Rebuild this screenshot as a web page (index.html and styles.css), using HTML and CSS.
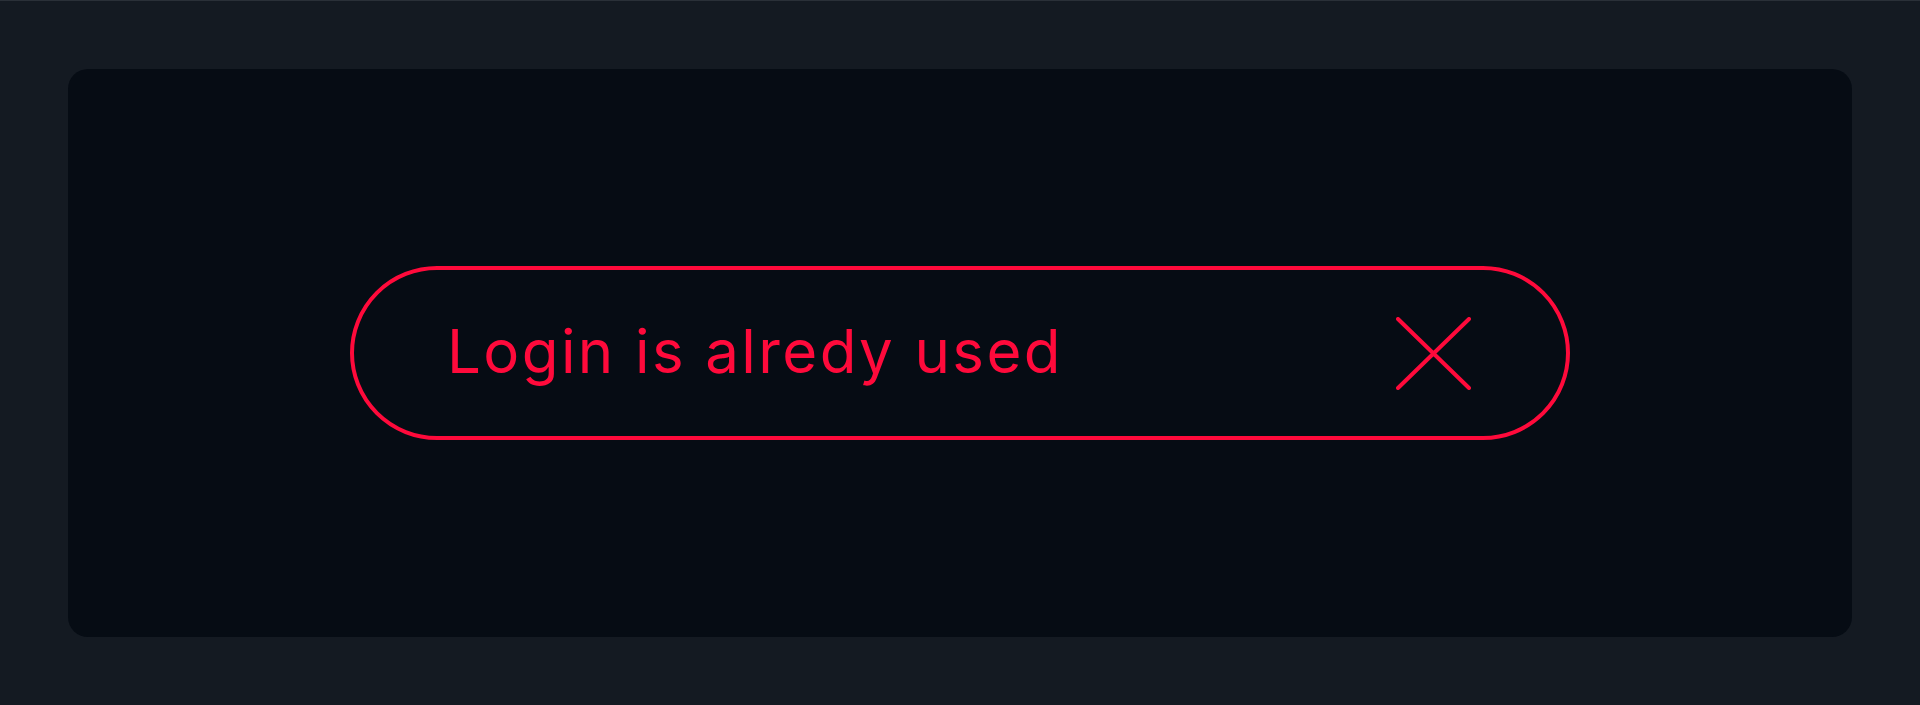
FILE: index.html
```html
<!DOCTYPE html>
<html>
<head>
  <title>Login error</title>
  <link rel="stylesheet" href="styles.css">
</head>
<body>
<div class="page">
  <div class="panel">
    <div class="alert">
      <span class="alert-text">Login is alredy used</span>
      <button class="close" type="button" aria-label="Close">
        <svg width="75" height="73" viewBox="0 0 75 73">
          <path d="M2 2 L73 71 M73 2 L2 71" stroke="#ff0a3b" stroke-width="4" stroke-linecap="round" fill="none"/>
        </svg>
      </button>
    </div>
  </div>
</div>
</body>
</html>
```

FILE: styles.css
```css
html, body {
  margin: 0;
  padding: 0;
  background: #141a22;
}
.page {
  height: 705px;
  box-sizing: border-box;
  padding: 68px;
  border-top: 1px solid #2a3038;
  display: flex;
}
.panel {
  flex: 1;
  background: #060c14;
  border-radius: 20px;
  display: flex;
  align-items: center;
  justify-content: center;
}
.alert {
  width: 1220px;
  height: 174px;
  box-sizing: border-box;
  border: 4px solid #ff0a3b;
  border-radius: 87px;
  padding: 0 95px 0 93px;
  display: flex;
  align-items: center;
  justify-content: space-between;
}
.alert-text {
  font-family: "Inter", "Liberation Sans", sans-serif;
  font-weight: 400;
  font-size: 60px;
  color: #ff0a3b;
  letter-spacing: 2.4px;
  margin-bottom: 5px;
}
.close {
  background: none;
  border: 0;
  padding: 0;
  display: flex;
  cursor: pointer;
}
```
